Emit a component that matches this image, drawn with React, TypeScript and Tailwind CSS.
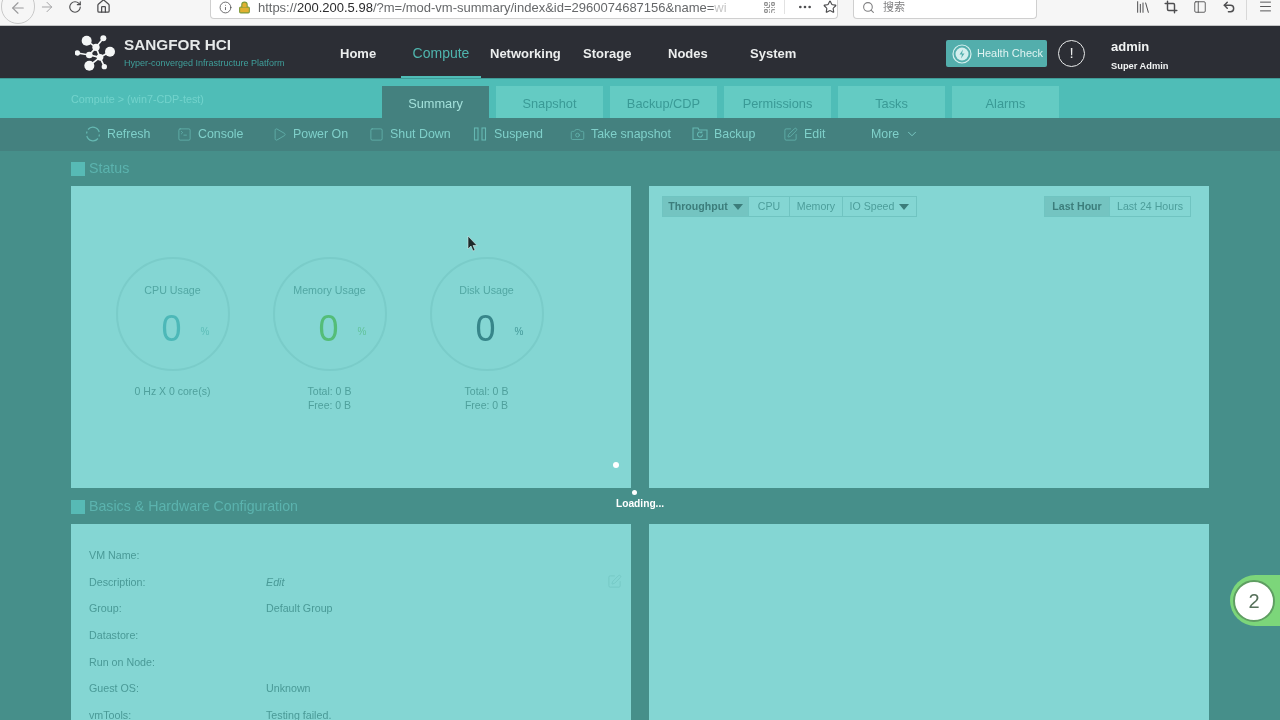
import {
  ArrowLeft,
  ArrowRight,
  Camera,
  ChevronDown,
  Crop,
  Home,
  Info,
  Library,
  Lock,
  Menu,
  MoreHorizontal,
  PanelLeft,
  Play,
  QrCode,
  RotateCw,
  Search,
  Square,
  SquarePen,
  SquareTerminal,
  Star,
  Undo2,
} from "lucide-react";
import type { ReactNode } from "react";

function RefreshIcon() {
  return (
    <svg width="16" height="16" viewBox="0 0 16 16" fill="none" stroke="currentColor" strokeWidth="1.2">
      <path d="M3 3.5A6.5 6.5 0 0 1 14.2 6" />
      <path d="M13 12.5A6.5 6.5 0 0 1 1.8 10" />
      <path d="M1.6 7.5a6.5 6.5 0 0 1 .5-2" />
      <path d="M14.4 8.5a6.5 6.5 0 0 1-.5 2" />
    </svg>
  );
}

function SuspendIcon() {
  return (
    <svg width="14" height="14" viewBox="0 0 14 14" fill="none" stroke="currentColor" strokeWidth="1.1">
      <rect x="1.5" y="1" width="3.5" height="12" />
      <rect x="9" y="1" width="3.5" height="12" />
    </svg>
  );
}

function BackupIcon() {
  return (
    <svg width="16" height="14" viewBox="0 0 16 14" fill="none" stroke="currentColor" strokeWidth="1.1">
      <path d="M1 12.5V1h5l1 2h8v9.5z" />
      <path d="M10.5 7.5a2.5 2.5 0 1 1-1-2" />
      <path d="M9.8 4.2v1.6H8.2" />
    </svg>
  );
}

function Logo() {
  const links = "M80 45L108 65M130 38L108 65M108 65L120 95M150 78L120 95M52 82L88 88M88 88L108 65M88 88L120 95M88 120L120 95M120 95L133 123";
  return (
    <svg width="40" height="36" viewBox="45 28 120 108" fill="#f4f6f6">
      <path d={links} stroke="#f4f6f6" strokeWidth="5" fill="none" />
      <circle cx="80" cy="45" r="15" />
      <circle cx="130" cy="38" r="9" />
      <circle cx="108" cy="65" r="11" />
      <circle cx="150" cy="78" r="15" />
      <circle cx="52" cy="82" r="8" />
      <circle cx="88" cy="88" r="10" />
      <circle cx="120" cy="95" r="10" />
      <circle cx="88" cy="120" r="15" />
      <circle cx="133" cy="123" r="8" />
    </svg>
  );
}

function BrowserBar() {
  return (
    <div className="flex h-[26px] items-start border-b border-[#c4c5c6] bg-[#f6f6f6] text-[#4e4e50]">
      <div className="-mt-[11px] ml-[1px] flex h-[35px] w-[34px] shrink-0 items-center justify-center rounded-full border border-[#c9c9c9] pt-[3px] text-[#9a9a9c]">
        <ArrowLeft size={18} strokeWidth={1.5} />
      </div>
      <ArrowRight size={16} strokeWidth={1.5} className="ml-[4px] mt-[-1px] text-[#a5a5a7]" />
      <RotateCw size={14} strokeWidth={2} className="ml-[13px]" />
      <Home size={15} strokeWidth={2} className="ml-[14px] -mt-[1px]" />
      <div className="ml-[99px] flex h-[19px] w-[628px] items-start rounded-b border-x border-b border-[#cfcfcf] bg-white pl-[8px] text-[13px] leading-[15px]">
        <Info size={13} strokeWidth={1.5} className="mt-[1px]" />
        <Lock size={13} strokeWidth={2} fill="#e0b030" className="ml-[6px] mt-[1px] text-[#7c9a3a]" />
        <span className="ml-[7px] w-[473px] overflow-hidden whitespace-nowrap text-[#66686a]">
          https://<span className="text-[#2b2b2d]">200.200.5.98</span>/?m=/mod-vm-summary/index&amp;id=2960074687156&amp;name=
          <span className="text-[#c7c7c7]">wi</span>
        </span>
        <QrCode size={13} className="ml-[33px] mt-[1px] text-[#8f8f8f]" />
        <span className="ml-[8px] h-[14px] w-px bg-[#e2e2e2]" />
        <MoreHorizontal size={16} className="ml-[12px] -mt-px" />
        <Star size={14} strokeWidth={2} className="ml-[10px]" />
      </div>
      <div className="ml-[15px] flex h-[19px] w-[184px] items-start rounded-b border-x border-b border-[#cfcfcf] bg-white pl-[8px] text-[11px] leading-[15px] text-[#808082]">
        <Search size={13} className="mt-[1px]" />
        <span className="ml-[8px]">搜索</span>
      </div>
      <Library size={16} strokeWidth={1.5} className="ml-[98px] -mt-[1px]" />
      <Crop size={14} strokeWidth={2.5} className="ml-[13px]" />
      <PanelLeft size={14} strokeWidth={1.5} className="ml-[15px]" />
      <Undo2 size={14} strokeWidth={2.5} className="ml-[15px]" />
      <span className="ml-[10px] h-[20px] w-px bg-[#d8d8d8]" />
      <Menu size={15} strokeWidth={1.5} className="ml-[11px] -mt-px" />
    </div>
  );
}

const navItems = [
  { label: "Networking", width: "w-[93px]" },
  { label: "Storage", width: "w-[85px]" },
  { label: "Nodes", width: "w-[82px]" },
  { label: "System", width: "w-[196px]" },
];

function Header() {
  return (
    <header className="flex h-[52px] items-stretch bg-[#2c2e35] pl-[75px]">
      <div className="flex w-[265px] shrink-0 items-center pt-[1px]">
        <Logo />
        <div className="ml-[9px]">
          <div className="text-[15.3px] font-bold leading-[18px] text-[#e6e9e9]">SANGFOR HCI</div>
          <div className="mt-[4px] whitespace-nowrap text-[9px] leading-[11px] text-[#3f9f9b]">
            Hyper-converged Infrastructure Platform
          </div>
        </div>
      </div>
      <div className="flex w-[61px] items-center pt-[4px] text-[13px] font-bold text-[#eceeee]">Home</div>
      <div className="flex w-[80px] items-center justify-center border-b-2 border-[#4fbdb7] pt-[5px] text-[14px] text-[#4fb5ae]">
        Compute
      </div>
      <div className="ml-[9px] flex items-center pt-[4px]">
        {navItems.map((item) => (
          <div key={item.label} className={`${item.width} text-[13px] font-bold text-[#eceeee]`}>
            {item.label}
          </div>
        ))}
      </div>
      <div className="flex items-center pt-[3px]">
        <div className="flex h-[27px] w-[101px] items-center rounded-[2px] bg-[#53aeac] pl-[6px] text-white">
          <svg width="20" height="20" viewBox="0 0 20 20" fill="none">
            <circle cx="10" cy="10" r="9" stroke="#d4efee" strokeWidth="1.2" />
            <circle cx="10" cy="10" r="6.5" fill="#d4efee" />
            <path d="M11 5.5L7.500 10.500H10L9 14.500L12.500 9.500H10z" fill="#53aeac" />
          </svg>
          <span className="ml-[5px] whitespace-nowrap text-[11px] text-[#dff3f2]">Health Check</span>
        </div>
        <div className="ml-[11px] -mt-[1px] flex h-[27px] w-[27px] items-center justify-center rounded-full border-[1.5px] border-[#e8eaea] text-[15px] text-[#e8eaea]">
          !
        </div>
        <div className="ml-[26px] mt-[4px] font-bold text-[#f1f3f3]">
          <div className="text-[13px] leading-[16px]">admin</div>
          <div className="mt-[5px] text-[9.3px] leading-[12px]">Super Admin</div>
        </div>
      </div>
    </header>
  );
}

const tabs = ["Snapshot", "Backup/CDP", "Permissions", "Tasks", "Alarms"];

function SubHeader() {
  return (
    <div className="flex h-[40px] items-end border-t border-[#3f9c98] bg-[#4fbdb7] pl-[71px]">
      <div className="mb-[13px] w-[311px] text-[10.8px] leading-[12px] text-[#72d3cc]">Compute &gt; (win7-CDP-test)</div>
      <div className="flex h-[32px] w-[107px] items-center justify-center bg-[#44817f] pt-[3px] text-[12.8px] text-[#a2e0da]">
        Summary
      </div>
      <div className="ml-[7px] flex gap-[7px]">
        {tabs.map((tab) => (
          <div key={tab} className="flex h-[32px] w-[107px] items-center justify-center bg-[#64cbc3] pt-[3px] text-[12.8px] text-[#3a9a96]">
            {tab}
          </div>
        ))}
      </div>
    </div>
  );
}

const toolbarItems: { label: string; width: string; icon: ReactNode }[] = [
  { label: "Refresh", width: "w-[91px]", icon: <RefreshIcon /> },
  { label: "Console", width: "w-[95px]", icon: <SquareTerminal size={15} strokeWidth={1.2} /> },
  { label: "Power On", width: "w-[97px]", icon: <Play size={15} strokeWidth={1.2} /> },
  { label: "Shut Down", width: "w-[104px]", icon: <Square size={15} strokeWidth={1.2} /> },
  { label: "Suspend", width: "w-[97px]", icon: <SuspendIcon /> },
  { label: "Take snapshot", width: "w-[123px]", icon: <Camera size={15} strokeWidth={1.2} /> },
  { label: "Backup", width: "w-[90px]", icon: <BackupIcon /> },
  { label: "Edit", width: "w-[89px]", icon: <SquarePen size={15} strokeWidth={1.2} /> },
];

function Toolbar() {
  return (
    <div className="flex h-[33px] items-center bg-[#44817f] pl-[85px] text-[12.4px] text-[#7fd0ca]">
      {toolbarItems.map((item) => (
        <div key={item.label} className={`${item.width} flex shrink-0 items-center gap-[6px] whitespace-nowrap`}>
          <span className="flex w-[16px] justify-center text-[#65b8b2]">{item.icon}</span>
          {item.label}
        </div>
      ))}
      <div className="flex items-center gap-[6px]">
        More
        <ChevronDown size={14} strokeWidth={1.5} />
      </div>
    </div>
  );
}

function SectionTitle({ title, height }: { title: string; height: string }) {
  return (
    <div className={`${height} flex items-center pl-[71px] pt-[1px]`}>
      <span className="h-[14px] w-[14px] bg-[#57bab5]" />
      <span className="ml-[4px] text-[14.2px] text-[#5bb3ae]">{title}</span>
    </div>
  );
}

const gauges = [
  { title: "CPU Usage", color: "text-[#4db8b8]", unit: "text-[#5dbdb8]", lines: ["0 Hz X 0 core(s)"] },
  { title: "Memory Usage", color: "text-[#54bd78]", unit: "text-[#62c29a]", lines: ["Total: 0 B", "Free: 0 B"] },
  { title: "Disk Usage", color: "text-[#37868a]", unit: "text-[#449a9a]", lines: ["Total: 0 B", "Free: 0 B"] },
];

function StatusCard() {
  return (
    <div className="flex h-[302px] w-[560px] bg-[#84d6d3] pl-[23px] pt-[71px]">
      {gauges.map((g) => (
        <div key={g.title} className="flex w-[157px] flex-col items-center">
          <div className="flex h-[114px] w-[114px] flex-col items-center rounded-full border-2 border-[#7accc9] pt-[25px]">
            <div className="text-[10.7px] leading-[13px] text-[#52a7a3]">{g.title}</div>
            <div className="mt-[12px] flex items-center">
              <span className={`text-[36px] font-light leading-[40px] ${g.color}`}>0</span>
              <span className={`ml-[19px] -mr-[26px] mt-[4px] text-[10px] ${g.unit}`}>%</span>
            </div>
          </div>
          <div className="mt-[13px] text-center text-[10.5px] leading-[14px] text-[#4fa09c]">
            {g.lines.map((line) => (
              <div key={line}>{line}</div>
            ))}
          </div>
        </div>
      ))}
    </div>
  );
}

function ChartCard() {
  return (
    <div className="flex h-[302px] w-[560px] items-start justify-between bg-[#84d6d3] pl-[13px] pr-[18px] pt-[10px]">
      <div className="flex h-[21px] border border-[#70c4c1] text-[10.6px] leading-[19px] text-[#4d9e9b]">
        <div className="flex w-[85px] items-center justify-center gap-[5px] bg-[#74c4c1] font-bold text-[#3c7d7b]">
          Throughput
          <span className="h-0 w-0 border-x-[5px] border-t-[6px] border-x-transparent border-t-[#3c7d7b]" />
        </div>
        <div className="w-[41px] border-l border-[#70c4c1] text-center">CPU</div>
        <div className="w-[53px] border-l border-[#70c4c1] text-center">Memory</div>
        <div className="flex w-[74px] items-center justify-center gap-[5px] border-l border-[#70c4c1]">
          IO Speed
          <span className="h-0 w-0 border-x-[5px] border-t-[6px] border-x-transparent border-t-[#3c7d7b]" />
        </div>
      </div>
      <div className="flex h-[21px] border border-[#70c4c1] text-[10.6px] leading-[19px] text-[#4d9e9b]">
        <div className="w-[64px] bg-[#74c4c1] text-center font-bold text-[#3c7d7b]">Last Hour</div>
        <div className="w-[81px] border-l border-[#70c4c1] text-center">Last 24 Hours</div>
      </div>
    </div>
  );
}

const rows = [
  { label: "VM Name:", value: "" },
  { label: "Description:", value: "Edit", italic: true },
  { label: "Group:", value: "Default Group" },
  { label: "Datastore:", value: "" },
  { label: "Run on Node:", value: "" },
  { label: "Guest OS:", value: "Unknown" },
  { label: "vmTools:", value: "Testing failed." },
];

function BasicsCard() {
  return (
    <div className="h-[196px] w-[560px] overflow-hidden bg-[#84d6d3] pl-[18px] pr-[9px] pt-[18px] text-[10.7px] text-[#4a9a97]">
      {rows.map((row) => (
        <div key={row.label} className="flex h-[26.6px] items-center">
          <div className="w-[177px]">{row.label}</div>
          <div className={row.italic ? "italic" : ""}>{row.value}</div>
          {row.italic && <SquarePen size={15} strokeWidth={1.2} className="ml-auto text-[#72c6c2]" />}
        </div>
      ))}
    </div>
  );
}

export default function App() {
  return (
    <div
      className="relative h-[720px] w-[1280px] overflow-hidden bg-[#468f8a] blur-[0.4px]"
      style={{ fontFamily: '"Liberation Sans", "Noto Sans CJK SC", sans-serif' }}
    >
      <BrowserBar />
      <Header />
      <SubHeader />
      <Toolbar />
      <SectionTitle title="Status" height="h-[35px]" />
      <div className="flex gap-[18px] pl-[71px]">
        <StatusCard />
        <ChartCard />
      </div>
      <SectionTitle title="Basics & Hardware Configuration" height="h-[36px]" />
      <div className="flex gap-[18px] pl-[71px]">
        <BasicsCard />
        <div className="h-[196px] w-[560px] bg-[#84d6d3]" />
      </div>

      {/* loading mask spinner */}
      <span className="absolute left-[613px] top-[462px] h-[6px] w-[6px] rounded-full bg-white" />
      <span className="absolute left-[632px] top-[490px] h-[5px] w-[5px] rounded-full bg-white" />
      <span className="absolute left-[616px] top-[497px] text-[10.2px] font-bold leading-[14px] text-white">Loading...</span>

      {/* mouse cursor */}
      <svg className="absolute left-[467px] top-[236px]" width="11" height="16" viewBox="0 0 11 16">
        <path d="M1 0v13l3-3 2 5 2-1-2-4.500h4z" fill="#1c2a2a" stroke="#d9efee" strokeWidth="0.6" />
      </svg>

      {/* chat badge */}
      <div className="absolute left-[1230px] top-[575px] flex h-[51px] w-[60px] items-center rounded-l-full bg-[#7cd67a] pl-[3px]">
        <div className="flex h-[42px] w-[42px] items-center justify-center rounded-full border-2 border-[#5f9e62] bg-white text-[20px] text-[#56705a]">
          2
        </div>
      </div>
    </div>
  );
}
